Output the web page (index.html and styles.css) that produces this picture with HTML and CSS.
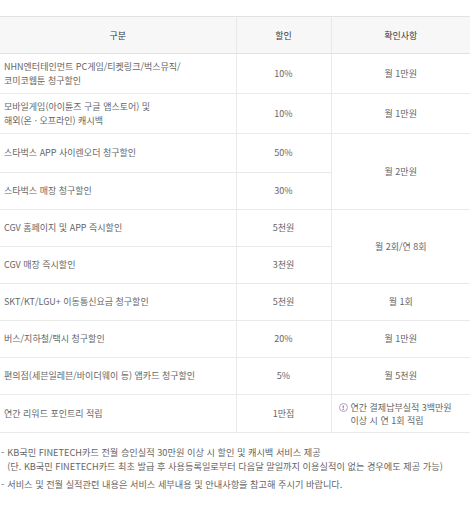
FILE: index.html
```html
<!DOCTYPE html>
<html lang="ko">
<head>
<meta charset="utf-8">
<link rel="stylesheet" href="styles.css">
</head>
<body>
<div class="wrap">
  <table class="benefit">
    <colgroup>
      <col class="c1"><col class="c2"><col class="c3">
    </colgroup>
    <thead>
      <tr><th>구분</th><th>할인</th><th>확인사항</th></tr>
    </thead>
    <tbody>
      <tr class="r2l"><td class="name">NHN엔터테인먼트 PC게임/티켓링크/벅스뮤직/<br>코미코웹툰 청구할인</td><td>10%</td><td>월 1만원</td></tr>
      <tr class="r2l"><td class="name">모바일게임(아이튠즈 구글 앱스토어) 및<br>해외(온 · 오프라인) 캐시백</td><td>10%</td><td>월 1만원</td></tr>
      <tr class="r3"><td class="name">스타벅스 APP 사이렌오더 청구할인</td><td>50%</td><td rowspan="2">월 2만원</td></tr>
      <tr class="r1"><td class="name">스타벅스 매장 청구할인</td><td>30%</td></tr>
      <tr class="r1"><td class="name">CGV 홈페이지 및 APP 즉시할인</td><td>5천원</td><td rowspan="2">월 2회/연 8회</td></tr>
      <tr class="r1"><td class="name">CGV 매장 즉시할인</td><td>3천원</td></tr>
      <tr class="r1"><td class="name">SKT/KT/LGU+ 이동통신요금 청구할인</td><td>5천원</td><td>월 1회</td></tr>
      <tr class="r1"><td class="name">버스/지하철/택시 청구할인</td><td>20%</td><td>월 1만원</td></tr>
      <tr class="r1"><td class="name">편의점(세븐일레븐/바이더웨이 등) 앱카드 청구할인</td><td>5%</td><td>월 5천원</td></tr>
      <tr class="r10"><td class="name">연간 리워드 포인트리 적립</td><td>1만점</td><td class="info"><div class="info-box"><span class="ico">!</span><span class="info-text">연간 결제납부실적 3백만원<br>이상 시 연 1회 적립</span></div></td></tr>
    </tbody>
  </table>
  <ul class="notes">
    <li><span class="dash">-</span><span>KB국민 FINETECH카드 전월 승인실적 30만원 이상 시 할인 및 캐시백 서비스 제공<br>(단. KB국민 FINETECH카드 최초 발급 후 사용등록일로부터 다음달 말일까지 이용실적이 없는 경우에도 제공 가능)</span></li>
    <li><span class="dash">-</span><span>서비스 및 전월 실적관련 내용은 서비스 세부내용 및 안내사항을 참고해 주시기 바랍니다.</span></li>
  </ul>
</div>
</body>
</html>
```

FILE: styles.css
```css
html, body {
  margin: 0;
  padding: 0;
  background: #fff;
}
body {
  font-family: "Noto Sans CJK KR", "Noto Sans", sans-serif;
  font-size: 9px;
  color: #666;
}
.wrap {
  width: 470px;
  padding-top: 16px;
}
.benefit {
  width: 470px;
  border-collapse: collapse;
  table-layout: fixed;
}
.c1 { width: 236px; }
.c2 { width: 95px; }
.c3 { width: 139px; }
.benefit th {
  height: 36px;
  padding: 0;
  background: #f7f7f7;
  color: #3a3a3a;
  font-weight: normal;
  border-top: 1px solid #e2e2e2;
  border-bottom: 1px solid #e2e2e2;
  border-left: 1px solid #e9e9e9;
  text-align: center;
  vertical-align: middle;
}
.benefit th:first-child { border-left: none; }
.benefit td {
  padding: 0;
  border-bottom: 1px solid #e9e9e9;
  border-left: 1px solid #e9e9e9;
  text-align: center;
  vertical-align: middle;
  line-height: 14px;
}
.benefit td.name {
  text-align: left;
  padding-left: 4px;
  border-left: none;
}
.r2l { height: 40px; }
.r3 { height: 39px; }
.r1 { height: 37px; }
.r10 { height: 38px; }
.benefit td.info {
  text-align: left;
  padding-left: 7px;
}
.info-box {
  display: flex;
  align-items: flex-start;
  gap: 3px;
  line-height: 13px;
}
.ico {
  flex: none;
  width: 7px;
  height: 7px;
  margin-top: 2px;
  border: 1px solid #a9a4d4;
  border-radius: 50%;
  color: #4b3f95;
  font-size: 6px;
  font-weight: bold;
  line-height: 7px;
  text-align: center;
}
.notes {
  list-style: none;
  margin: 12px 0 0;
  padding: 0;
  font-size: 9.2px;
  line-height: 14px;
}
.notes li {
  display: flex;
  gap: 3px;
  margin-bottom: 4px;
  padding-left: 1px;
}
.dash { flex: none; }
```
